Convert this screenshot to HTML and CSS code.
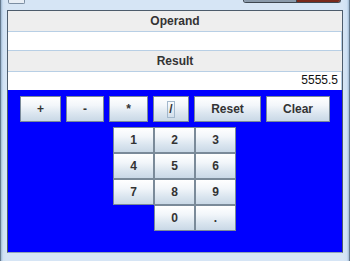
FILE: index.html
```html
<!DOCTYPE html>
<html>
<head>
<meta charset="utf-8">
<link rel="stylesheet" href="styles.css">
</head>
<body>
<div class="window">
  <div class="titlebar">
    <div class="sysbtn"></div>
    <div class="capbtns">
      <div class="capbtn"></div>
      <div class="capbtn close"></div>
    </div>
  </div>
  <div class="content">
    <div class="label">Operand</div>
    <div class="field"></div>
    <div class="label">Result</div>
    <div class="field field2">5555.5</div>
    <div class="panel">
      <div class="ops">
        <button class="btn w41">+</button>
        <button class="btn w38">-</button>
        <button class="btn w39">*</button>
        <button class="btn w36"><span class="focus">/</span></button>
        <button class="btn w67">Reset</button>
        <button class="btn w64">Clear</button>
      </div>
      <div class="keypad">
        <button class="key">1</button>
        <button class="key">2</button>
        <button class="key">3</button>
        <button class="key">4</button>
        <button class="key">5</button>
        <button class="key">6</button>
        <button class="key">7</button>
        <button class="key">8</button>
        <button class="key">9</button>
        <span class="empty"></span>
        <button class="key">0</button>
        <button class="key">.</button>
      </div>
    </div>
  </div>
</div>
</body>
</html>
```
FILE: styles.css
```css
html, body {
  margin: 0;
  padding: 0;
  width: 350px;
  height: 261px;
  overflow: hidden;
}
.window {
  box-sizing: border-box;
  width: 350px;
  height: 261px;
  background: linear-gradient(90deg, #2a3a4a 0, #9fb9d3 1px, #cfe1f4 3px, #d6e5f5 6px, #d6e5f5 343px, #cfe1f4 347px, #9fb9d3 349px, #2a3a4a 350px);
  padding: 0 7px 8px 7px;
  display: flex;
  flex-direction: column;
}
.titlebar {
  height: 10px;
  display: flex;
  align-items: flex-start;
  flex: none;
}
.sysbtn {
  margin-left: 1px;
  width: 15px;
  height: 3px;
  border: 1px solid #7c8ea2;
  border-top: none;
  border-radius: 0 0 2px 2px;
  background: #e8eef5;
}
.capbtns {
  margin-left: auto;
  margin-right: 2px;
  display: flex;
  height: 2px;
  border: 1px solid #3d4650;
  border-top: none;
  border-radius: 0 0 3px 3px;
  overflow: hidden;
}
.capbtn {
  width: 52px;
  height: 2px;
  background: #8a9aab;
  border-right: 1px solid #3d4650;
}
.capbtn.close {
  width: 43px;
  border-right: none;
  background: #7a2a1c;
}
.content {
  flex: 1;
  border: 1px solid #4d5c6c;
  border-bottom-color: #8ea3b8;
  display: flex;
  flex-direction: column;
  background: #0000ff;
}
.label {
  height: 20px;
  line-height: 20px;
  background: #eeeeee;
  text-align: center;
  font-family: "Liberation Sans", Arial, sans-serif;
  font-weight: bold;
  font-size: 12px;
  color: #333333;
  flex: none;
}
.field {
  box-sizing: border-box;
  height: 20px;
  background: #ffffff;
  border-top: 1px solid #b8cfe5;
  border-bottom: 1px solid #b8cfe5;
  border-right: 1px solid #b8cfe5;
  flex: none;
  font-family: "Liberation Sans", Arial, sans-serif;
  font-size: 12px;
  color: #111111;
  text-align: right;
  line-height: 18px;
  padding-right: 3px;
}
.field2 {
  height: 19px;
  line-height: 17px;
  border-bottom: none;
}
.panel {
  flex: 1;
  background: #0000ff;
  display: flex;
  flex-direction: column;
  align-items: center;
  padding-top: 6px;
  gap: 5px;
}
.ops {
  display: flex;
  gap: 5px;
}
.btn, .key {
  box-sizing: border-box;
  height: 26px;
  margin: 0;
  padding: 0;
  border: 1px solid #7a8a99;
  background: linear-gradient(180deg, #ffffff 0%, #f2f6fa 35%, #dae5ef 70%, #c9d8e6 100%);
  font-family: "Liberation Sans", Arial, sans-serif;
  font-weight: bold;
  font-size: 12px;
  color: #333333;
  display: flex;
  align-items: center;
  justify-content: center;
}
.w41 { width: 41px; }
.w38 { width: 38px; }
.w39 { width: 39px; }
.w36 { width: 36px; }
.w67 { width: 67px; }
.w64 { width: 64px; }
.focus {
  display: inline-block;
  border: 1px solid #a3b8cc;
  padding: 0 1px;
  line-height: 15px;
}
.keypad {
  display: grid;
  grid-template-columns: 41px 41px 41px;
  grid-auto-rows: 26px;
  margin-right: 1px;
}
.key {
  width: 41px;
}
```
